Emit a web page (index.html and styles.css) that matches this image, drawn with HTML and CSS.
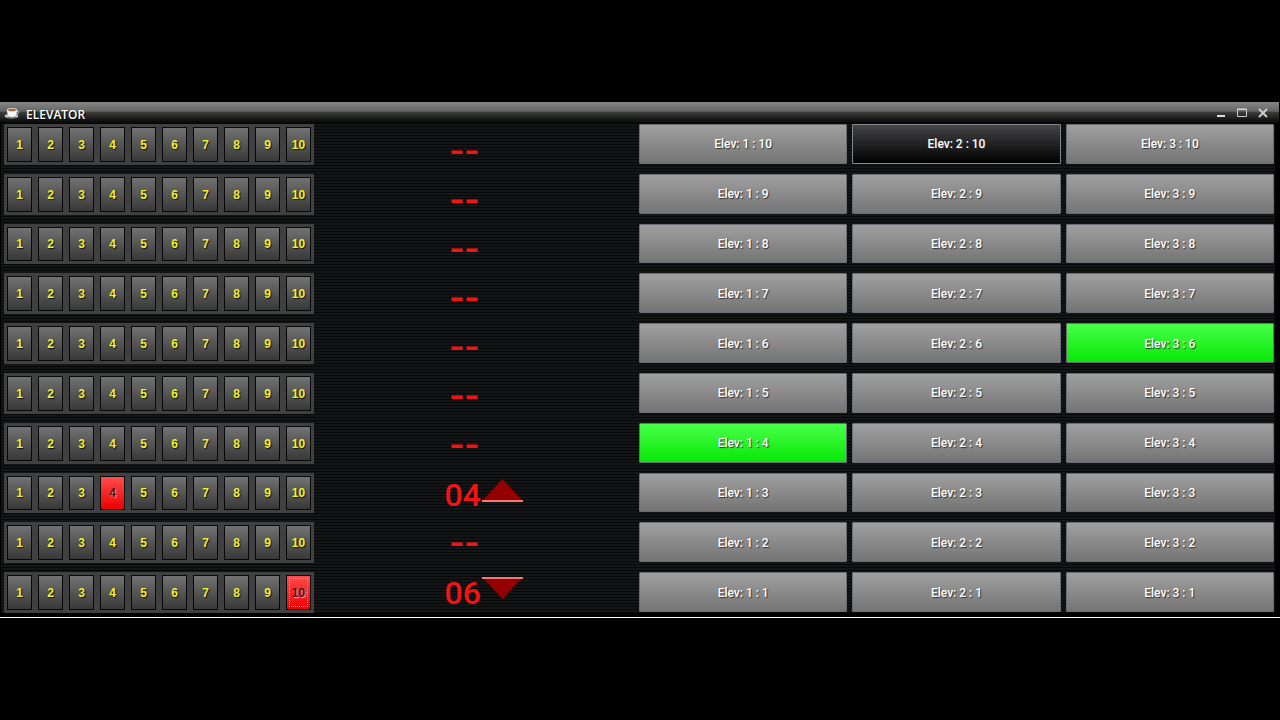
FILE: index.html
```html
<!DOCTYPE html>
<html lang="en">
<head>
	<meta charset="UTF-8">
	<title>ELEVATOR</title>
	<link rel="stylesheet" href="styles.css">
	<script src="script.js" defer></script>
</head>
<body>
	<div class="window">
		<!--title bar-->
		<header class="titlebar">
			<svg class="cup" viewBox="0 0 16 14" width="16" height="14" aria-hidden="true">
				<ellipse cx="7.500" cy="10" rx="7" ry="2.500" fill="#b9bec6"/>
				<path d="M3 4c0 5 2 7 5 7s5-2 5-7z" fill="#f4f4f4"/>
				<path d="M12.500 5c3-.5 3 3-1 3" fill="none" stroke="#dcdcdc"/>
				<ellipse cx="8" cy="4" rx="5" ry="2" fill="#e9e4dc"/>
				<ellipse cx="8" cy="4" rx="4" ry="1.200" fill="#a06a42"/>
				<path d="M4 11.500h8" stroke="#777d88"/>
			</svg>
			<h1>ELEVATOR</h1>
			<div class="controls">
				<button type="button" aria-label="Minimize"><svg viewBox="0 0 12 12" width="12" height="12"><path d="M2 9h8" stroke="#ddd" stroke-width="2"/></svg></button>
				<button type="button" aria-label="Maximize"><svg viewBox="0 0 12 12" width="12" height="12"><path d="M1.500 2.500h9v7h-9z" fill="none" stroke="#ccc"/><path d="M1 2h10" stroke="#ddd"/></svg></button>
				<button type="button" aria-label="Close"><svg viewBox="0 0 12 12" width="12" height="12"><path d="M2 2l8 8M10 2l-8 8" stroke="#ccc" stroke-width="2"/></svg></button>
			</div>
		</header>
		<main class="stage">
			<!--call panels, one per floor-->
			<div class="panels" id="panels"></div>
			<!--led displays-->
			<div class="displays" id="displays"></div>
			<!--elevator shafts-->
			<div class="shafts" id="shafts"></div>
		</main>
	</div>
</body>
</html>
```

FILE: styles.css
```css
*{
	box-sizing: border-box;
	margin: 0;
	padding: 0;
}
body{
	min-height: 100vh;
	display: flex;
	flex-direction: column;
	justify-content: center;
	background: #000;
	font-family: "Liberation Sans", Arial, sans-serif;
	font-size: 12px;
}
button{
	font: inherit;
	font-weight: bold;
	cursor: pointer;
}
.window{
	border-bottom: 1px solid #fff;
	padding: 0 5px 4px 1px;
}

/* title bar */
.titlebar{
	display: flex;
	align-items: center;
	gap: 6px;
	height: 22px;
	margin: 0 -4px 0 -1px;
	padding: 0 10px 0 4px;
	background: linear-gradient(#858585, #656664 42%, #3c3e3a 46%, #060706 95%);
}
.titlebar h1{
	flex: 1;
	font-family: "Open Sans", "Noto Sans", sans-serif;
	font-size: 12px;
	line-height: 20px;
	font-weight: 600;
	color: #fff;
	padding-top: 3px;
	text-shadow: 1px 1px 1px #000;
}
.controls{
	display: flex;
	gap: 9px;
}
.controls button{
	width: 12px;
	height: 12px;
	border: 0;
	background: none;
}
.controls svg{
	display: block;
}

.stage{
	display: flex;
	height: calc(100vh - 231px);
	min-height: 420px;
	padding: 0 1px 0 3px;
	background: repeating-linear-gradient(#131516 0, #131516 2px, #070808 2px, #070808 3px);
}

/* call panels */
.panels{
	flex: none;
	display: grid;
	grid-auto-rows: 1fr;
	gap: 9px;
}
.panel{
	display: flex;
	gap: 6px;
	padding: 3px;
	background: #404040;
}
.call{
	width: 25px;
	padding-top: 1px;
	border: 1px solid #080808;
	background: linear-gradient(#727272, #383838);
	color: #f0f02c;
	text-shadow: 1px 1px 1px #111;
}
.call.on{
	background: linear-gradient(#ff4c4c, #ee0000);
	color: #4c1010;
	text-shadow: 1px 1px 1px #ff9c9c;
}
.call.focus{
	outline: 1px dotted #ffa060;
	outline-offset: -4px;
}

/* led displays */
.displays{
	flex: 1;
	display: grid;
	grid-auto-rows: 1fr;
}
.display{
	display: flex;
	justify-content: center;
	align-items: center;
	padding-left: 14px;
}
.code{
	width: 37px;
	padding-top: 8px;
	font-family: Roboto, sans-serif;
	font-weight: 500;
	font-size: 32px;
	line-height: 32px;
	color: #f01414;
}
.code.idle{
	padding: 4px 2px 0 0;
	font-family: "DejaVu Sans", sans-serif;
	font-weight: normal;
	font-size: 42px;
	text-align: right;
}
.arrow{
	width: 41px;
	height: 24px;
}

/* elevator shafts */
.shafts{
	width: 50%;
	display: grid;
	grid-template-columns: repeat(3, 1fr);
	grid-auto-rows: 1fr;
	gap: 10px 5px;
	padding-bottom: 1px;
}
.car{
	padding-top: 1px;
	border: 1px solid #6b6c74;
	border-radius: 1px;
	background: linear-gradient(#a0a0a0, #747474);
	color: #fff;
	font-family: Roboto, "Liberation Sans", sans-serif;
	font-weight: 500;
	text-shadow: 1px 1px 1px #333;
}
.car.here{
	background: linear-gradient(#48ff48, #08e808);
}
.car.pressed{
	background: linear-gradient(#444446, #000);
	border-color: #85868e;
}
```

FILE: script.js
```js
var FLOORS = 10;
var panels = document.getElementById("panels");
var displays = document.getElementById("displays");
var shafts = document.getElementById("shafts");

var cars = {"1:4": "here", "3:6": "here", "2:10": "pressed"};
var calls = {"3:4": "on", "1:10": "on focus"};
var leds = {
	3: {code: "04", arrow: '<path d="M20.500 0L41 22H0z" fill="#940000"/><path d="M0 22h41" stroke="#f07878" stroke-width="2"/>'},
	1: {code: "06", arrow: '<path d="M20.500 22L41 0H0z" fill="#940000"/><path d="M0 1h41" stroke="#f07878" stroke-width="2"/>'}
};

for (var floor = FLOORS; floor >= 1; floor--) {
	var html = "";
	for (var i = 1; i <= FLOORS; i++) {
		html += '<button type="button" class="call ' + (calls[floor + ":" + i] || "") + '">' + i + '</button>';
	}
	panels.innerHTML += '<div class="panel">' + html + '</div>';

	var led = leds[floor];
	displays.innerHTML += '<div class="display"><span class="code' + (led ? "" : " idle") + '">' + (led ? led.code : "--") + '</span>' +
		'<svg class="arrow" viewBox="0 0 41 24">' + (led ? led.arrow : "") + '</svg></div>';

	for (var e = 1; e <= 3; e++) {
		shafts.innerHTML += '<button type="button" class="car ' + (cars[e + ":" + floor] || "") + '">Elev: ' + e + ' : ' + floor + '</button>';
	}
}
```
